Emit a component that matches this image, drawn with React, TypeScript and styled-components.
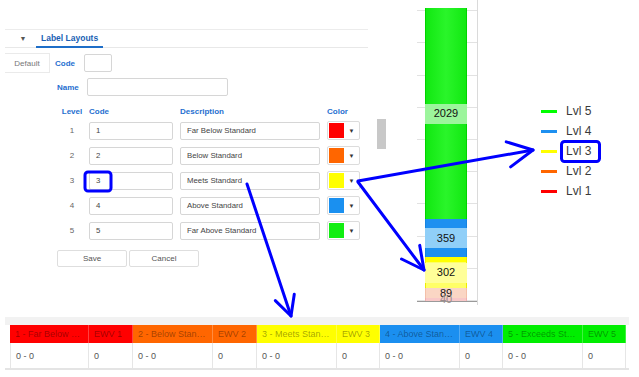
import React from "react";
import styled, { createGlobalStyle } from "styled-components";

const GlobalStyle = createGlobalStyle`
  html, body { margin: 0; padding: 0; background: #fff; }
  body { font-family: "Liberation Sans", Arial, sans-serif; }
  * { box-sizing: border-box; }
`;

type Level = { level: number; code: string; desc: string; color: string };

const levels: Level[] = [
  { level: 1, code: "1", desc: "Far Below Standard", color: "#ff0000" },
  { level: 2, code: "2", desc: "Below Standard", color: "#ff6600" },
  { level: 3, code: "3", desc: "Meets Standard", color: "#ffff00" },
  { level: 4, code: "4", desc: "Above Standard", color: "#1a90f0" },
  { level: 5, code: "5", desc: "Far Above Standard", color: "#11ee11" },
];

const legend = [
  { name: "Lvl 5", color: "#00ff00" },
  { name: "Lvl 4", color: "#1e90f0" },
  { name: "Lvl 3", color: "#ffff00" },
  { name: "Lvl 2", color: "#ff6600" },
  { name: "Lvl 1", color: "#ff0000" },
];

const columns = [
  { label: "1 - Far Below Standard", color: "#ff0000", w: 79, value: "0 - 0" },
  { label: "EWV 1", color: "#ff0000", w: 44, value: "0" },
  { label: "2 - Below Standard", color: "#ff6600", w: 80, value: "0 - 0" },
  { label: "EWV 2", color: "#ff6600", w: 44, value: "0" },
  { label: "3 - Meets Standard", color: "#ffff00", w: 80, value: "0 - 0" },
  { label: "EWV 3", color: "#ffff00", w: 43, value: "0" },
  { label: "4 - Above Standard", color: "#1b8ff0", w: 80, value: "0 - 0" },
  { label: "EWV 4", color: "#1b8ff0", w: 43, value: "0" },
  { label: "5 - Exceeds Standard", color: "#00ee00", w: 80, value: "0 - 0" },
  { label: "EWV 5", color: "#00ee00", w: 43, value: "0" },
];

const Page = styled.div`
  position: relative;
  width: 639px;
  height: 377px;
  overflow: hidden;
`;

const Top = styled.div`
  display: flex;
  align-items: flex-start;
  height: 317px;
`;

/* ---------- form ---------- */

const FormPanel = styled.div`
  width: 363px;
  margin-left: 5px;
  padding-top: 29px;
`;

const TabBar = styled.div`
  display: flex;
  align-items: stretch;
  height: 19px;
  border-top: 1px solid #ececec;
  border-bottom: 1px solid #e8e8e8;
`;

const Caret = styled.span`
  margin-left: 14px;
  width: 8px;
  font-size: 7px;
  color: #555;
  display: flex;
  align-items: center;
  justify-content: center;
`;

const Tab = styled.div`
  margin-left: 9px;
  padding: 0 5px;
  display: flex;
  align-items: center;
  font-size: 8.5px;
  font-weight: bold;
  color: #1a5fb4;
  border-bottom: 2px solid #1e6ec8;
  margin-bottom: -1px;
`;

const Body = styled.div`
  padding-top: 5px;
`;

const Row = styled.div<{ $indent?: number; $top?: number }>`
  display: flex;
  align-items: center;
  padding-left: ${(p) => p.$indent ?? 0}px;
  margin-top: ${(p) => p.$top ?? 0}px;
`;

const DefaultTab = styled.div`
  width: 45px;
  height: 20px;
  border: 1px solid #eaeaea;
  border-left: none;
  display: flex;
  align-items: center;
  justify-content: center;
  font-size: 8px;
  color: #777;
`;

const FieldLabel = styled.span<{ $gap?: number }>`
  margin-left: ${(p) => p.$gap ?? 0}px;
  font-size: 8px;
  font-weight: bold;
  color: #1f6fd0;
`;

const TextInput = styled.div<{ $w: number; $gap?: number }>`
  width: ${(p) => p.$w}px;
  height: 18px;
  margin-left: ${(p) => p.$gap ?? 0}px;
  border: 1px solid #d6d6d6;
  border-radius: 2px;
  background: #fff;
  display: flex;
  align-items: center;
  padding-left: 6px;
  font-size: 7.8px;
  color: #444;
`;

const LevelGrid = styled.div`
  display: grid;
  grid-template-columns: 29px 91px 147px 33px;
  grid-auto-rows: 25px;
  grid-template-rows: 14px;
  margin: 8px 0 0 55px;
  align-items: center;
`;

const HeadCell = styled.div<{ $center?: boolean }>`
  font-size: 8px;
  font-weight: bold;
  color: #1f6fd0;
  text-align: ${(p) => (p.$center ? "center" : "left")};
  padding-right: ${(p) => (p.$center ? 5 : 0)}px;
`;

const LevelNum = styled.div`
  font-size: 8px;
  color: #666;
  text-align: center;
  padding-right: 5px;
`;

const ColorPicker = styled.div`
  width: 33px;
  height: 19px;
  border: 1px solid #dcdcdc;
  border-radius: 2px;
  display: flex;
  align-items: center;
  padding-left: 1px;
`;

const Swatch = styled.div<{ $color: string }>`
  width: 15px;
  height: 15px;
  background: ${(p) => p.$color};
`;

const PickerCaret = styled.span`
  flex: 1;
  text-align: center;
  font-size: 6px;
  color: #333;
`;

const Buttons = styled.div`
  display: flex;
  gap: 2px;
  margin: 7px 0 0 52px;
`;

const Button = styled.div`
  width: 70px;
  height: 17px;
  border: 1px solid #dedede;
  border-radius: 2px;
  display: flex;
  align-items: center;
  justify-content: center;
  font-size: 8px;
  color: #555;
`;

/* ---------- chart ---------- */

const ScrollThumb = styled.div`
  width: 9px;
  height: 30px;
  margin: 119px 0 0 9px;
  background: #c8c8c8;
`;

const Chart = styled.div`
  width: 61px;
  height: 305px;
  margin-left: 31px;
  border-right: 1px solid #dadada;
`;

const Plot = styled.div`
  height: 302px;
  display: flex;
  align-items: flex-end;
  border-bottom: 1px solid #9a9a9a;
  background-image: repeating-linear-gradient(
    to top,
    #e2e2e2 0,
    #e2e2e2 1px,
    transparent 1px,
    transparent 32.2px
  );
`;

const Bar = styled.div`
  width: 42px;
  height: 293px;
  margin-left: 8px;
  display: flex;
  flex-direction: column;
`;

const Segment = styled.div<{ $h: number; $bg: string; $edge: string }>`
  height: ${(p) => p.$h}px;
  background: ${(p) => p.$bg};
  box-shadow: inset 1px 0 0 ${(p) => p.$edge}, inset -1px 0 0 ${(p) => p.$edge};
  display: flex;
  flex-direction: column;
  justify-content: center;
`;

const Band = styled.div<{ $bg?: string; $fg?: string; $h?: number }>`
  height: ${(p) => p.$h ?? 20}px;
  background: ${(p) => p.$bg ?? "transparent"};
  display: flex;
  align-items: center;
  justify-content: center;
  font-size: 11px;
  color: ${(p) => p.$fg ?? "#111"};
  line-height: 1;
  overflow: visible;
`;

const Legend = styled.div`
  margin: 101px 0 0 63px;
  display: flex;
  flex-direction: column;
`;

const LegendItem = styled.div`
  height: 20px;
  display: flex;
  align-items: center;
  gap: 9px;
  font-size: 12px;
  color: #3a3a3a;
`;

const LegendLine = styled.span<{ $color: string }>`
  width: 16px;
  height: 3px;
  background: ${(p) => p.$color};
`;

/* ---------- table ---------- */

const TableWrap = styled.div`
  margin: 0 10px 0 5px;
  border-top: 8px solid #f2f2f2;
  border-bottom: 2px solid #e4e4e4;
  padding: 0 3px 0 5px;
`;

const Grid = styled.div<{ $cols: string }>`
  display: grid;
  grid-template-columns: ${(p) => p.$cols};
  grid-template-rows: 18px 25px;
`;

const HeaderCell = styled.div<{ $bg: string }>`
  min-width: 0;
  background: ${(p) => p.$bg};
  color: rgba(0, 0, 0, 0.38);
  font-size: 9px;
  padding: 0 5px;
  display: flex;
  align-items: center;
  border-right: 1px solid rgba(255, 255, 255, 0.25);
  overflow: hidden;
`;

const Ellipsis = styled.span`
  min-width: 0;
  white-space: nowrap;
  overflow: hidden;
  text-overflow: ellipsis;
`;

const DataCell = styled.div<{ $first?: boolean }>`
  font-size: 9px;
  color: #555;
  padding: 0 5px;
  display: flex;
  align-items: center;
  border-right: 1px solid #e6e6e6;
  border-left: ${(p) => (p.$first ? "1px solid #e6e6e6" : "none")};
`;

/* ---------- annotations ---------- */

const Overlay = styled.svg`
  position: absolute;
  left: 0;
  top: 0;
  pointer-events: none;
`;

function Arrow({ x1, y1, x2, y2, len = 24 }: { x1: number; y1: number; x2: number; y2: number; len?: number }) {
  const dx = x2 - x1;
  const dy = y2 - y1;
  const l = Math.hypot(dx, dy);
  const bx = -dx / l;
  const by = -dy / l;
  const a = (27 * Math.PI) / 180;
  const c = Math.cos(a);
  const s = Math.sin(a);
  const w1 = [x2 + len * (bx * c - by * s), y2 + len * (bx * s + by * c)];
  const w2 = [x2 + len * (bx * c + by * s), y2 + len * (-bx * s + by * c)];
  return (
    <g stroke="#0000ff" strokeWidth={3} strokeLinecap="round" fill="none">
      <line x1={x1} y1={y1} x2={x2} y2={y2} />
      <polyline points={`${w1[0]},${w1[1]} ${x2},${y2} ${w2[0]},${w2[1]}`} strokeLinejoin="round" />
    </g>
  );
}

export default function App() {
  const cols = columns.map((c) => `${c.w}px`).join(" ");
  return (
    <Page>
      <GlobalStyle />
      <Top>
        <FormPanel>
          <TabBar>
            <Caret>▼</Caret>
            <Tab>Label Layouts</Tab>
          </TabBar>
          <Body>
            <Row>
              <DefaultTab>Default</DefaultTab>
              <FieldLabel $gap={5}>Code</FieldLabel>
              <TextInput $w={28} $gap={9} />
            </Row>
            <Row $indent={52} $top={5}>
              <FieldLabel>Name</FieldLabel>
              <TextInput $w={141} $gap={8} />
            </Row>
            <LevelGrid>
              <HeadCell $center>Level</HeadCell>
              <HeadCell>Code</HeadCell>
              <HeadCell>Description</HeadCell>
              <HeadCell>Color</HeadCell>
              {levels.map((lv) => (
                <React.Fragment key={lv.level}>
                  <LevelNum>{lv.level}</LevelNum>
                  <TextInput $w={84}>{lv.code}</TextInput>
                  <TextInput $w={140}>{lv.desc}</TextInput>
                  <ColorPicker>
                    <Swatch $color={lv.color} />
                    <PickerCaret>▼</PickerCaret>
                  </ColorPicker>
                </React.Fragment>
              ))}
            </LevelGrid>
            <Buttons>
              <Button>Save</Button>
              <Button>Cancel</Button>
            </Buttons>
          </Body>
        </FormPanel>

        <ScrollThumb />

        <Chart>
          <Plot>
            <Bar>
              <Segment
                $h={211}
                $edge="#00d400"
                $bg="linear-gradient(to right, #10e810 0%, #2af52a 50%, #10e810 100%)"
              >
                <Band $bg="#9cf59c">2029</Band>
              </Segment>
              <Segment $h={38} $edge="#1584e0" $bg="#1e90f0">
                <Band $bg="#90cff8">359</Band>
              </Segment>
              <Segment $h={31} $edge="#eeee00" $bg="linear-gradient(to bottom, #ffff00 0, #ffff00 5px, #ffff66 5px)">
                <Band $bg="#ffff99">302</Band>
              </Segment>
              <Segment $h={10} $edge="#f4c0a8" $bg="#fad6c4">
                <Band $h={10}>89</Band>
              </Segment>
              <Segment $h={3} $edge="#f0b0b0" $bg="#f8c8c8">
                <Band $h={3} $fg="#9a8a8a">40</Band>
              </Segment>
            </Bar>
          </Plot>
        </Chart>

        <Legend>
          {legend.map((l) => (
            <LegendItem key={l.name}>
              <LegendLine $color={l.color} />
              {l.name}
            </LegendItem>
          ))}
        </Legend>
      </Top>

      <TableWrap>
        <Grid $cols={cols}>
          {columns.map((c) => (
            <HeaderCell key={c.label} $bg={c.color}>
              <Ellipsis>{c.label}</Ellipsis>
            </HeaderCell>
          ))}
          {columns.map((c, i) => (
            <DataCell key={c.label + "v"} $first={i === 0}>
              {c.value}
            </DataCell>
          ))}
        </Grid>
      </TableWrap>

      <Overlay width={639} height={377} viewBox="0 0 639 377">
        <rect x={85} y={172} width={26} height={19} rx={3} fill="none" stroke="#0000ff" strokeWidth={3} />
        <rect x={561.5} y={141.5} width={38} height={20} rx={3} fill="none" stroke="#0000ff" strokeWidth={3} />
        <Arrow x1={358} y1={181} x2={533} y2={150} len={28} />
        <Arrow x1={358} y1={182} x2={424} y2={270} len={25} />
        <Arrow x1={247} y1={184} x2={291} y2={316} len={22} />
      </Overlay>
    </Page>
  );
}
